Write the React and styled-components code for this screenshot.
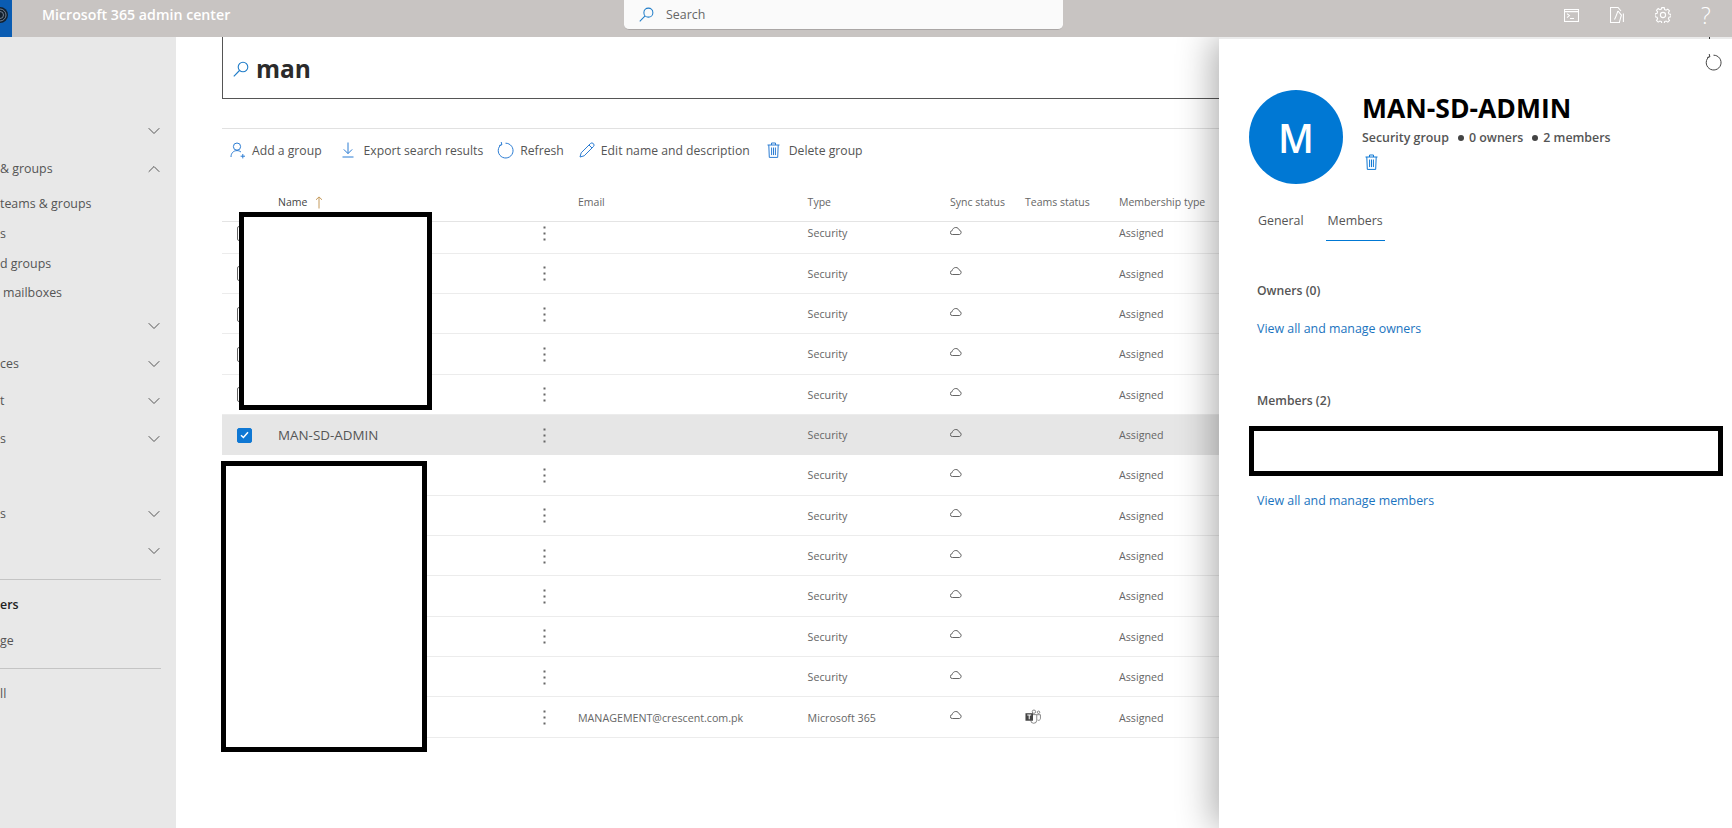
import React from 'react';
import styled, { createGlobalStyle } from 'styled-components';

const GlobalStyle = createGlobalStyle`
  html, body { margin: 0; padding: 0; height: 100%; background: #fff; }
  body { font-family: "Open Sans", "Noto Sans", sans-serif; overflow: hidden; }
  #root { height: 100%; }
`;

const Page = styled.div`
  display: flex;
  flex-direction: column;
  width: 1732px;
  height: 828px;
  overflow: hidden;
`;

// Верхняя панель
const TopBar = styled.header`
  flex: 0 0 37px;
  display: grid;
  grid-template-columns: 624px 439px 1fr;
  background: #c8c4c2;
  position: relative;
  z-index: 3;
`;
const Brand = styled.div`
  display: flex;
  align-items: flex-start;
  gap: 30px;
`;
const LogoBox = styled.svg`
  display: block;
`;
const BrandTitle = styled.span`
  color: #fff;
  font-size: 14.2px;
  font-weight: 600;
  line-height: 30px;
`;
const TopSearch = styled.div`
  height: 30px;
  box-sizing: border-box;
  display: flex;
  align-items: center;
  gap: 12px;
  padding: 0 0 0 15px;
  background: #fafafa;
  border-bottom: 1px solid #aaa6a5;
  border-radius: 0 0 5px 5px;
  color: #666;
  font-size: 12.4px;
`;
const TopIcons = styled.div`
  display: flex;
  align-items: center;
  height: 30px;
  padding-left: 501px;
  gap: 31px;
`;
const HelpMark = styled.span`
  color: #fff;
  font-size: 23px;
  font-weight: 300;
  line-height: 30px;
  margin-left: -1px;
`;

const Body = styled.div`
  flex: 1;
  display: flex;
  min-height: 0;
`;

// Левое меню
const Sidebar = styled.nav`
  flex: 0 0 176px;
  background: #e8e8e8;
  padding-top: 75px;
  box-sizing: border-box;
  font-size: 12.4px;
`;
const NavItem = styled.div`
  height: ${p => p.$h}px;
  display: flex;
  align-items: center;
  justify-content: space-between;
  padding: 0 16px 0 ${p => p.$indent || 0}px;
  font-weight: ${p => (p.$strong ? 600 : 400)};
  color: ${p => (p.$strong ? '#222' : '#555')};
`;
const NavLabel = styled.span`
  margin-bottom: 1px;
`;
const NavRule = styled.div`
  height: 1px;
  width: 161px;
  background: #c4c4c4;
  margin: ${p => p.$before}px 0 ${p => p.$after}px;
`;

// Основная область
const Content = styled.main`
  flex: 1;
  min-width: 0;
  padding-left: 46px;
`;
const SearchField = styled.div`
  height: 62px;
  box-sizing: border-box;
  display: flex;
  align-items: center;
  gap: 7px;
  padding: 2px 0 0 10px;
  border-left: 1.5px solid #555;
  border-bottom: 1.5px solid #555;
`;
const SearchValue = styled.span`
  font-size: 24.5px;
  font-weight: 700;
  color: #2b2b2b;
`;
const Toolbar = styled.div`
  margin-top: 29px;
  height: 44px;
  box-sizing: border-box;
  display: flex;
  align-items: center;
  padding: 0 0 1px 8px;
  border-top: 1px solid #e1e1e1;
`;
const Action = styled.div`
  display: flex;
  align-items: center;
  gap: ${p => p.$gap || 6}px;
  margin-right: ${p => p.$after || 0}px;
  font-size: 12.2px;
  color: #555;
`;
const TableWrap = styled.div`
  position: relative;
`;
const COLUMNS = '56px 259px 41px 229.6px 142.4px 75px 94px 1fr';
const TableHead = styled.div`
  height: 50px;
  box-sizing: border-box;
  display: grid;
  grid-template-columns: ${COLUMNS};
  align-items: center;
  padding-top: 11px;
  border-bottom: 1px solid #e4e4e4;
  font-size: 10.5px;
  color: #666;
`;
const HeadName = styled.span`
  display: flex;
  align-items: center;
  gap: 8px;
  color: #444;
`;
const TableBody = styled.div`
  overflow: hidden;
`;
const Row = styled.div`
  height: 40.35px;
  box-sizing: border-box;
  display: grid;
  grid-template-columns: ${COLUMNS};
  align-items: center;
  padding-top: 1px;
  margin-top: ${p => (p.$clipped ? '-8.8px' : '0')};
  background: ${p => (p.$selected ? '#e6e6e6' : '#fff')};
  border-bottom: 1px solid ${p => (p.$selected ? '#e6e6e6' : '#ececec')};
  font-size: 10.7px;
  color: #666;
`;
const CheckCell = styled.div`
  padding-left: 15px;
`;
const Checkbox = styled.div`
  width: 15px;
  height: 15px;
  box-sizing: border-box;
  border-radius: 2px;
  display: flex;
  align-items: center;
  justify-content: center;
  border: 1px solid ${p => (p.$checked ? '#0f78d4' : '#666')};
  background: ${p => (p.$checked ? '#0f78d4' : '#fff')};
`;
const RowName = styled.span`
  font-size: 13.4px;
  color: #555;
`;
const MoreDots = styled.svg`
  justify-self: start;
  margin-left: 6px;
  display: block;
`;
const SyncCloud = styled.svg`
  display: block;
  margin-top: -5px;
`;
const Redaction = styled.div`
  position: absolute;
  box-sizing: border-box;
  left: ${p => p.$left}px;
  top: ${p => p.$top}px;
  width: ${p => p.$width}px;
  height: ${p => p.$height}px;
  border: 5px solid #000;
  background: #fff;
`;

// Боковая панель группы
const Panel = styled.aside`
  flex: 0 0 513px;
  box-sizing: border-box;
  border-top: 2px solid #ebebeb;
  padding: 15px 9px 0 30px;
  background: #fff;
  box-shadow: -6px 0 34px rgba(0, 0, 0, 0.32);
  position: relative;
  z-index: 2;
  &::before {
    content: '';
    position: absolute;
    top: -2px;
    right: 22px;
    width: 1px;
    height: 2px;
    background: #333;
  }
`;
const PanelRefresh = styled.div`
  display: flex;
  justify-content: flex-end;
  padding-right: 1px;
  height: 36px;
`;
const Profile = styled.div`
  display: flex;
  gap: 19px;
  height: 94px;
`;
const Avatar = styled.div`
  flex: 0 0 94px;
  height: 94px;
  border-radius: 50%;
  background: #0078d4;
  color: #fff;
  font-size: 39px;
  font-weight: 600;
  display: flex;
  align-items: center;
  justify-content: center;
`;
const ProfileText = styled.div`
  padding-top: 4px;
`;
const GroupName = styled.div`
  font-size: 26.5px;
  font-weight: 700;
  color: #000;
  line-height: 28px;
`;
const Meta = styled.div`
  display: flex;
  align-items: center;
  gap: 9px;
  margin-top: 7px;
  font-size: 12.4px;
  font-weight: 600;
  color: #555;
  line-height: 18px;
`;
const MetaPart = styled.span`
  display: flex;
  align-items: center;
  gap: 5px;
  &::before {
    content: '';
    width: 6px;
    height: 6px;
    border-radius: 50%;
    background: #444;
    display: ${p => (p.$dot ? 'block' : 'none')};
  }
`;
const TrashButton = styled.div`
  margin: 6px 0 0 3px;
`;
const Tabs = styled.div`
  display: flex;
  gap: 20px;
  margin: 27px 0 0 7px;
`;
const Tab = styled.div`
  height: 29.5px;
  padding: 0 2px;
  box-sizing: border-box;
  font-size: 12.4px;
  line-height: 20px;
  color: #555;
  border-bottom: ${p => (p.$active ? '1.5px solid #0078d4' : 'none')};
`;
const Section = styled.section`
  padding-left: 8px;
  margin-top: ${p => p.$top}px;
`;
const SectionTitle = styled.div`
  font-size: 12.2px;
  font-weight: 600;
  color: #555;
  line-height: 18px;
`;
const ManageLink = styled.a`
  display: block;
  font-size: 12.4px;
  color: #1b74c0;
  line-height: 18px;
  margin-top: ${p => p.$top}px;
`;
const MemberBox = styled.div`
  box-sizing: border-box;
  height: 50px;
  margin: 16px 0 0 -8px;
  border: 5px solid #000;
  background: #fff;
`;

// Иконки
const Search = ({ size = 15, color = '#1f7cc8' }) => (
  <svg width={size} height={size} viewBox="0 0 16 16" fill="none" stroke={color} strokeWidth="1.1">
    <circle cx="10" cy="6" r="4.8" />
    <path d="M6.5 9.5 0.8 15.4" />
  </svg>
);
const Chevron = ({ up }) => (
  <svg width="12" height="8" viewBox="0 0 12 8" fill="none" stroke="#555" strokeWidth="1">
    <path d={up ? 'M0.7 6.8 6 1.5l5.3 5.3' : 'M0.7 1.2 6 6.5l5.3-5.3'} />
  </svg>
);
const AddUser = () => (
  <svg width="16" height="17" viewBox="0 0 16 17" fill="none" stroke="#2b7cd3" strokeWidth="1">
    <circle cx="7" cy="4.6" r="3.6" />
    <path d="M1 15c0-3.8 2.4-6.4 6-6.4 1.6 0 3 .5 4 1.5" />
    <path d="M12.8 12v4.4M10.6 14.2H15" />
  </svg>
);
const Download = () => (
  <svg width="12" height="16" viewBox="0 0 12 16" fill="none" stroke="#2b7cd3" strokeWidth="1">
    <path d="M6 0.5v11M1.8 7.4 6 11.6l4.2-4.2M0.5 15h11" />
  </svg>
);
const Refresh = ({ color = '#2b7cd3' }) => (
  <svg width="17" height="17" viewBox="0 0 17 17" fill="none" stroke={color} strokeWidth="1">
    <path d="M4.6 2.4A7.4 7.4 0 1 0 8.5 1.2" />
    <path d="M4.2 0 4.9 2.8 2.2 3.5" />
  </svg>
);
const Pencil = () => (
  <svg width="16" height="16" viewBox="0 0 16 16" fill="none" stroke="#2b7cd3" strokeWidth="1">
    <path d="M1 15l1.2-4.2L11.4 1.6a1.8 1.8 0 0 1 3 3L5.2 13.8 1 15ZM10 3l3 3" />
  </svg>
);
const Trash = ({ color = '#2b7cd3', w = 13, h = 16 }) => (
  <svg width={w} height={h} viewBox="0 0 13 16" fill="none" stroke={color} strokeWidth="1">
    <path d="M0.5 3h12M4.5 3V1h4v2M1.8 3l.5 12.4h8.4l.5-12.4M4.6 5.5v7.6M6.5 5.5v7.6M8.4 5.5v7.6" />
  </svg>
);
const SortArrow = () => (
  <svg width="8" height="13" viewBox="0 0 8 13" fill="none" stroke="#c49a5c" strokeWidth="1">
    <path d="M4 12.5V1M1 3.8 4 .9l3 2.9" />
  </svg>
);
const Dots = () => (
  <MoreDots width="3" height="15" viewBox="0 0 3 15" fill="#666">
    <rect x="0.5" y="0.5" width="2" height="2" />
    <rect x="0.5" y="6.5" width="2" height="2" />
    <rect x="0.5" y="12.5" width="2" height="2" />
  </MoreDots>
);
const Cloud = () => (
  <SyncCloud width="12" height="8" viewBox="0 0 12 8" fill="none" stroke="#555" strokeWidth="0.9">
    <path d="M3 7.5H2.4a1.9 1.9 0 0 1-.3-3.8C2.5 1.8 4 .5 5.8.5c1.7 0 3.1 1.1 3.5 2.7a2.2 2.2 0 0 1 .2 4.3H3Z" />
  </SyncCloud>
);
const TeamsIcon = () => (
  <svg width="16" height="15" viewBox="0 0 17 15">
    <g fill="none" stroke="#666" strokeWidth="0.8">
      <circle cx="9.5" cy="2.4" r="1.8" />
      <circle cx="14.4" cy="3" r="1.3" />
      <path d="M6 5.5h6.5v6a3.2 3.2 0 0 1-6.4 0M12.8 5.6h3.6v4a2 2 0 0 1-3 1.7" />
    </g>
    <rect x="0.5" y="4" width="8" height="8" fill="#444" />
    <path d="M2.4 6h4.2M4.5 6v4.4" stroke="#fff" strokeWidth="1.1" />
  </svg>
);
const Check = () => (
  <svg width="9" height="8" viewBox="0 0 9 8" fill="none" stroke="#fff" strokeWidth="1.5">
    <path d="M1 4.2 3.4 6.5 8 1.2" />
  </svg>
);
const ConsoleIcon = () => (
  <svg width="15" height="13" viewBox="0 0 15 13" fill="none" stroke="#fff" strokeWidth="1.1">
    <rect x="0.5" y="0.5" width="14" height="12" />
    <path d="M0.5 2.6h14M3 4.6l2.4 2L3 8.6M6 9.5h4" />
  </svg>
);
const DocIcon = () => (
  <svg width="14" height="16" viewBox="0 0 14 16" fill="none" stroke="#fff" strokeWidth="1.1">
    <path d="M10 15.5H.5V.5h7.5l3 3.5M13.4 15V6.5M8 4c-1 2-1.6 5-3.5 8.5M8 4l3.4 4.2-2 7" />
  </svg>
);
const GearIcon = () => (
  <svg width="16" height="16" viewBox="0 0 16 16" fill="none" stroke="#fff" strokeWidth="1.1">
    <circle cx="8" cy="8" r="2.6" />
    <path d="M6.8.6h2.4l.4 2 1.5.6 1.7-1.1 1.7 1.7-1.1 1.7.6 1.5 2 .4v2.4l-2 .4-.6 1.5 1.1 1.7-1.7 1.7-1.7-1.1-1.5.6-.4 2H6.8l-.4-2-1.5-.6-1.7 1.1-1.7-1.7 1.1-1.7-.6-1.5-2-.4V6.8l2-.4.6-1.5-1.1-1.7 1.7-1.7 1.7 1.1 1.5-.6Z" />
  </svg>
);

const NAV = [
  { h: 38, chevron: 'down' },
  { h: 38, text: '& groups', chevron: 'up' },
  { h: 32, text: 'teams & groups' },
  { h: 28, text: 's' },
  { h: 32, text: 'd groups' },
  { h: 26, text: 'mailboxes', indent: 3 },
  { h: 40, chevron: 'down' },
  { h: 36, text: 'ces', chevron: 'down' },
  { h: 38, text: 't', chevron: 'down' },
  { h: 38, text: 's', chevron: 'down' },
  { h: 37 },
  { h: 38, text: 's', chevron: 'down' },
  { h: 36, chevron: 'down' },
];

const ROWS = [
  { clipped: true },
  {},
  {},
  {},
  {},
  { name: 'MAN-SD-ADMIN', selected: true },
  {},
  {},
  {},
  {},
  {},
  {},
  { email: 'MANAGEMENT@crescent.com.pk', type: 'Microsoft 365', teams: true },
];

const App = () => (
  <Page>
    <GlobalStyle />
    <TopBar>
      <Brand>
        <LogoBox width="12" height="37" viewBox="0 0 12 37">
          <rect width="12" height="37" fill="#0a5cb2" />
          <circle cx="0" cy="15" r="8" fill="#12202e" />
          <circle cx="0" cy="15" r="6" fill="none" stroke="#8a97a8" strokeWidth="0.8" />
          <circle cx="0" cy="15" r="3.5" fill="none" stroke="#8a97a8" strokeWidth="0.8" />
        </LogoBox>
        <BrandTitle>Microsoft 365 admin center</BrandTitle>
      </Brand>
      <TopSearch>
        <Search />
        Search
      </TopSearch>
      <TopIcons>
        <ConsoleIcon />
        <DocIcon />
        <GearIcon />
        <HelpMark>?</HelpMark>
      </TopIcons>
    </TopBar>
    <Body>
      <Sidebar>
        {NAV.map((item, i) => (
          <NavItem key={i} $h={item.h} $indent={item.indent}>
            <NavLabel>{item.text}</NavLabel>
            {item.chevron && <Chevron up={item.chevron === 'up'} />}
          </NavItem>
        ))}
        <NavRule $before={10} $after={7} />
        <NavItem $h={36} $strong><NavLabel>ers</NavLabel></NavItem>
        <NavItem $h={36}><NavLabel>ge</NavLabel></NavItem>
        <NavRule $before={9} $after={7} />
        <NavItem $h={36}><NavLabel>ll</NavLabel></NavItem>
      </Sidebar>
      <Content>
        <SearchField>
          <Search size={16} />
          <SearchValue>man</SearchValue>
        </SearchField>
        <Toolbar>
          <Action $after={20}><AddUser />Add a group</Action>
          <Action $gap={10} $after={14}><Download />Export search results</Action>
          <Action $after={15}><Refresh />Refresh</Action>
          <Action $after={17}><Pencil />Edit name and description</Action>
          <Action $gap={9}><Trash />Delete group</Action>
        </Toolbar>
        <TableWrap>
          <TableHead>
            <span />
            <HeadName>Name <SortArrow /></HeadName>
            <span />
            <span>Email</span>
            <span>Type</span>
            <span>Sync status</span>
            <span>Teams status</span>
            <span>Membership type</span>
          </TableHead>
          <TableBody>
            {ROWS.map((row, i) => (
              <Row key={i} $clipped={row.clipped} $selected={row.selected}>
                <CheckCell>
                  <Checkbox $checked={row.selected}>{row.selected && <Check />}</Checkbox>
                </CheckCell>
                <RowName>{row.name}</RowName>
                <Dots />
                <span>{row.email}</span>
                <span>{row.type || 'Security'}</span>
                <Cloud />
                <span>{row.teams && <TeamsIcon />}</span>
                <span>Assigned</span>
              </Row>
            ))}
          </TableBody>
          <Redaction $left={17} $top={40} $width={193} $height={198} />
          <Redaction $left={-1} $top={289} $width={206} $height={291} />
        </TableWrap>
      </Content>
      <Panel>
        <PanelRefresh><Refresh color="#444" /></PanelRefresh>
        <Profile>
          <Avatar>M</Avatar>
          <ProfileText>
            <GroupName>MAN-SD-ADMIN</GroupName>
            <Meta>
              <MetaPart>Security group</MetaPart>
              <MetaPart $dot>0 owners</MetaPart>
              <MetaPart $dot>2 members</MetaPart>
            </Meta>
            <TrashButton><Trash color="#0f78d4" /></TrashButton>
          </ProfileText>
        </Profile>
        <Tabs>
          <Tab>General</Tab>
          <Tab $active>Members</Tab>
        </Tabs>
        <Section $top={41}>
          <SectionTitle>Owners (0)</SectionTitle>
          <ManageLink $top={20}>View all and manage owners</ManageLink>
        </Section>
        <Section $top={54}>
          <SectionTitle>Members (2)</SectionTitle>
          <MemberBox />
          <ManageLink $top={16}>View all and manage members</ManageLink>
        </Section>
      </Panel>
    </Body>
  </Page>
);

export default App;
